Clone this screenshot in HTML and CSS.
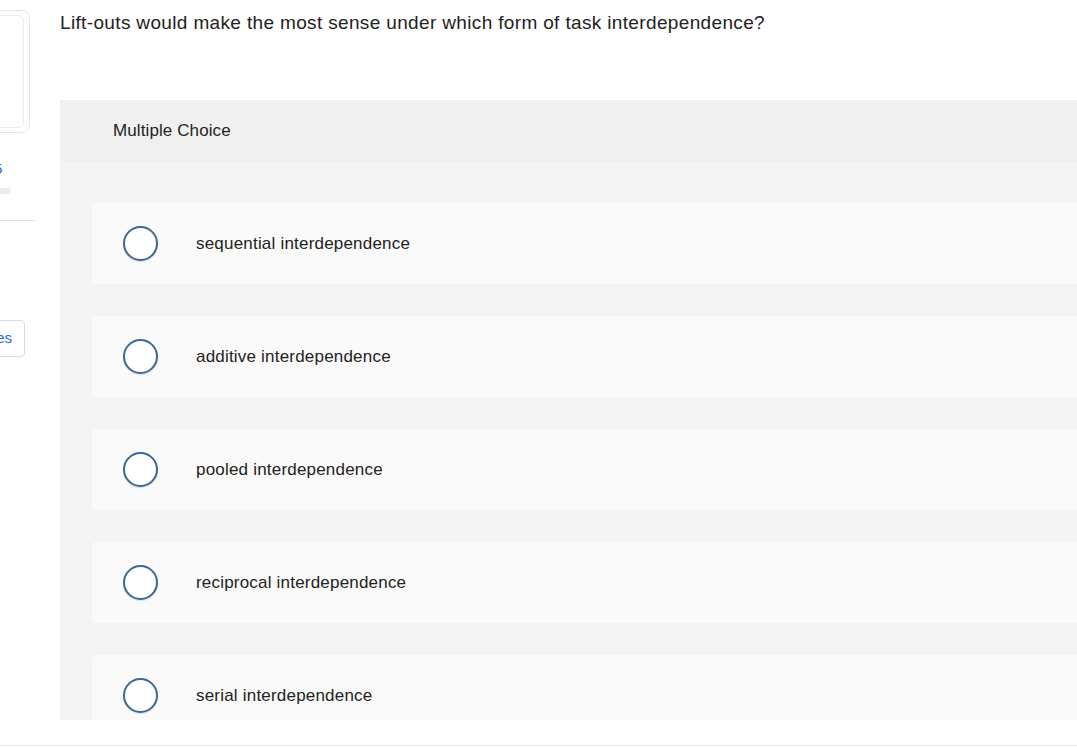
FILE: index.html
```html
<!DOCTYPE html>
<html lang="en">
<head>
<meta charset="utf-8">
<title>Multiple Choice</title>
<link rel="stylesheet" href="styles.css">
</head>
<body>
<div class="page">
  <aside class="sidebar">
    <div class="stack">
      <div class="stack-inner"></div>
    </div>
    <div class="count">5</div>
    <div class="progress"></div>
    <div class="divider"></div>
    <div class="side-btn">es</div>
  </aside>
  <main class="main">
    <h1 class="question">Lift-outs would make the most sense under which form of task interdependence?</h1>
    <section class="panel">
      <div class="panel-head">Multiple Choice</div>
      <div class="choices">
        <div class="choice"><span class="radio"></span><span class="label">sequential interdependence</span></div>
        <div class="choice"><span class="radio"></span><span class="label">additive interdependence</span></div>
        <div class="choice"><span class="radio"></span><span class="label">pooled interdependence</span></div>
        <div class="choice"><span class="radio"></span><span class="label">reciprocal interdependence</span></div>
        <div class="choice"><span class="radio"></span><span class="label">serial interdependence</span></div>
      </div>
    </section>
  </main>
</div>
<div class="footer-line"></div>
</body>
</html>
```

FILE: styles.css
```css
html, body {
  margin: 0;
  padding: 0;
  background: #fff;
  overflow: hidden;
}
body {
  font-family: "Liberation Sans", Arial, sans-serif;
  color: #222;
  width: 1077px;
  height: 747px;
}
.page {
  display: flex;
  height: 745px;
  overflow: hidden;
}
.sidebar {
  width: 60px;
  flex: none;
}
.stack {
  margin-top: 10px;
  margin-left: -40px;
  width: 70px;
  height: 123px;
  border: 1px solid #e6e6e6;
  border-radius: 8px;
  box-sizing: border-box;
  padding: 4px 5px 4px 0;
}
.stack-inner {
  height: 100%;
  border: 1px solid #ececec;
  border-radius: 6px;
  box-sizing: border-box;
}
.count {
  margin-top: 28px;
  margin-left: -6px;
  font-size: 15px;
  line-height: 16px;
  color: #2e6bd0;
}
.progress {
  margin-top: 11px;
  margin-left: -20px;
  width: 31px;
  height: 6px;
  border-radius: 3px;
  background: #ececec;
}
.divider {
  margin-top: 26px;
  width: 35px;
  height: 1px;
  background: #e2e2e2;
}
.side-btn {
  margin-top: 99px;
  margin-left: -30px;
  width: 55px;
  height: 37px;
  box-sizing: border-box;
  border: 1px solid #dcdcdc;
  border-radius: 4px;
  font-size: 15px;
  line-height: 34px;
  color: #2e6bd0;
  text-align: right;
  padding-right: 12px;
}
.main {
  flex: none;
  width: 1060px;
  display: flex;
  flex-direction: column;
}
.question {
  margin: 10px 0 0 0;
  font-size: 19px;
  letter-spacing: 0.35px;
  font-weight: normal;
  line-height: 26px;
  color: #222;
  height: 90px;
}
.panel {
  background: #f4f4f4;
  height: 620px;
  overflow: hidden;
}
.panel-head {
  background: #f0f0f0;
  height: 62px;
  line-height: 62px;
  padding-left: 53px;
  font-size: 17px;
  letter-spacing: 0.1px;
  color: #222;
}
.choices {
  display: flex;
  flex-direction: column;
  gap: 32px;
  padding: 41px 0 0 32px;
}
.choice {
  display: flex;
  align-items: center;
  height: 81px;
  background: #fafafa;
  border-radius: 4px;
  flex: none;
}
.radio {
  width: 35px;
  height: 35px;
  box-sizing: border-box;
  border: 2px solid #3d6893;
  border-radius: 50%;
  background: #fff;
  margin-left: 31px;
  box-shadow: 0 1px 1px rgba(0,0,0,0.12);
  flex: none;
}
.label {
  margin-left: 38px;
  font-size: 17px;
  letter-spacing: 0.2px;
  color: #222;
}
.footer-line {
  height: 1px;
  background: #ececec;
  width: 100%;
}
```
